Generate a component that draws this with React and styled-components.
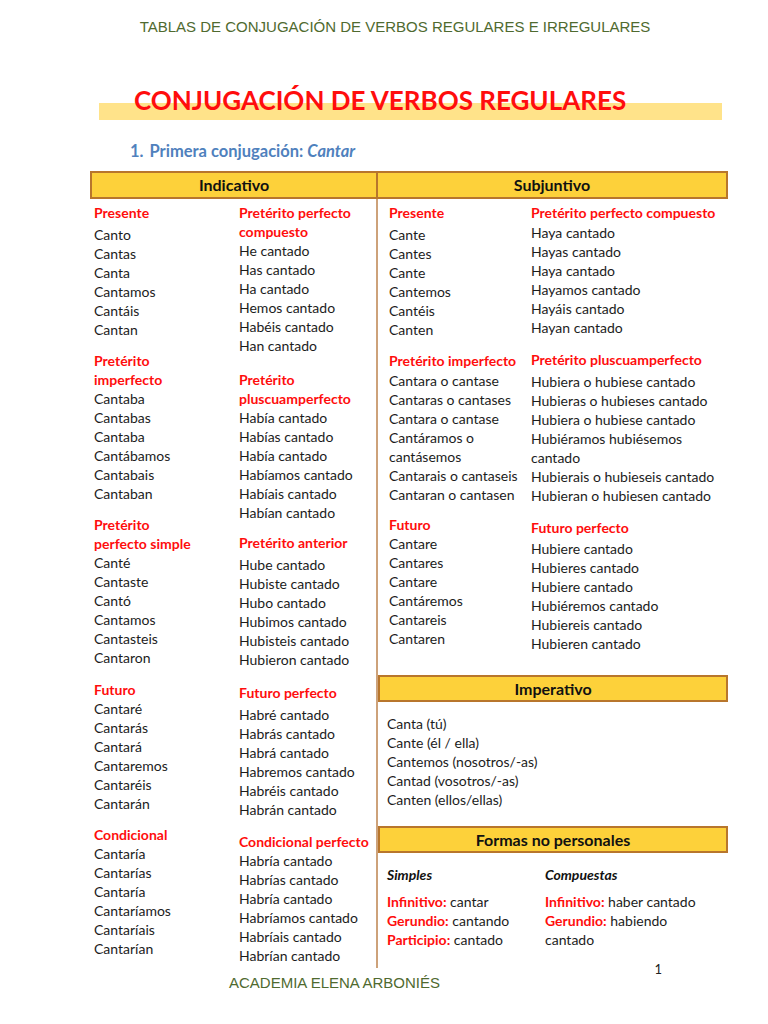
import React from 'react';
import styled, { createGlobalStyle } from 'styled-components';

const GlobalStyle = createGlobalStyle`
  html, body { margin: 0; padding: 0; background: #fff; }
  body { font-family: Lato, "Noto Sans", sans-serif; }
`;

const GREEN = '#4f6a2f';
const RED = '#ff0d0d';
const YELLOW = '#fdd13a';
const BORDER = '#b8762c';
const DIVIDER = '#cda27a';

const Page = styled.div`
  width: 768px;
  height: 1024px;
  overflow: hidden;
  background: #fff;
  color: #1c1c1c;
`;

const RunningHead = styled.div`
  padding: 19px 0 0 22px;
  text-align: center;
  font: 15px/16px "Liberation Sans", Arial, sans-serif;
  color: ${GREEN};
`;

const TitleBar = styled.div`
  margin: 45px 46px 0 99px;
  height: 40px;
  background: linear-gradient(to bottom, transparent 23px, #ffe38a 23px);
`;

const Title = styled.h1`
  margin: 0;
  padding-left: 35px;
  font: 700 26px/40px Lato, sans-serif;
  color: ${RED};
  white-space: nowrap;
`;

const Subtitle = styled.h2`
  margin: 21px 0 0;
  padding-left: 130px;
  font: 700 16.5px/20px Lato, sans-serif;
  color: #4f81bd;
  white-space: nowrap;
  & > span { margin-right: 6px; }
  & > em { font-style: italic; }
`;

const Table = styled.div`
  margin: 10px 0 0 90px;
  width: 638px;
`;

const HeaderRow = styled.div`
  display: grid;
  grid-template-columns: 286px 1fr;
  height: 28px;
  box-sizing: border-box;
  border: 2px solid ${BORDER};
  background: ${YELLOW};
`;

const HeadCell = styled.div`
  text-align: center;
  font: 700 16px/24px Lato, sans-serif;
  color: #111;
  &:first-child { border-right: 2px solid ${BORDER}; }
`;

const Body = styled.div`
  display: grid;
  grid-template-columns: 288px 1fr;
`;

const LeftCell = styled.div`
  border-right: 2px solid ${DIVIDER};
  padding: 4px 0 3px 4px;
  display: grid;
  grid-template-columns: 145px 1fr;
  align-items: start;
`;

const RightCell = styled.div`
  display: flex;
  flex-direction: column;
  padding-top: 4px;
`;

const TopGrid = styled.div`
  padding-left: 11px;
  display: grid;
  grid-template-columns: 142px 1fr;
  align-items: start;
`;

const Column = styled.div`
  display: flex;
  flex-direction: column;
`;

const Group = styled.div`
  margin-top: ${(p) => p.$mt}px;
`;

const Heading = styled.div`
  font: 700 14px/19px Lato, sans-serif;
  color: ${RED};
  white-space: nowrap;
  margin-bottom: ${(p) => p.$hb || 0}px;
`;

const Line = styled.div`
  font: 400 14px/19px Lato, sans-serif;
  color: #1c1c1c;
  white-space: nowrap;
`;

const SectionBox = styled.div`
  margin-top: ${(p) => p.$mt}px;
  height: 27px;
  box-sizing: border-box;
  border: 2px solid ${BORDER};
  background: ${YELLOW};
  text-align: center;
  font: 700 16px/23px Lato, sans-serif;
  color: #111;
`;

const ImperList = styled.div`
  margin-top: 12px;
  padding-left: 9px;
`;

const NPGrid = styled.div`
  margin-top: 12px;
  padding-left: 9px;
  display: grid;
  grid-template-columns: 158px 1fr;
  row-gap: 8px;
`;

const SubHead = styled.div`
  font: italic 700 14px/19px Lato, sans-serif;
  color: #111;
`;

const Label = styled.span`
  font-weight: 700;
  color: ${RED};
`;

const PageNum = styled.div`
  margin-top: -6px;
  padding-right: 106px;
  text-align: right;
  font: 13px/14px Lato, sans-serif;
  color: #222;
`;

const FootText = styled.div`
  margin-top: -1px;
  padding-left: 229px;
  font: 15px/16px "Liberation Sans", Arial, sans-serif;
  color: ${GREEN};
`;

const leftCol1 = [
  { mt: 0, hb: 3, head: ['Presente'], items: ['Canto', 'Cantas', 'Canta', 'Cantamos', 'Cantáis', 'Cantan'] },
  { mt: 12, hb: 0, head: ['Pretérito', 'imperfecto'], items: ['Cantaba', 'Cantabas', 'Cantaba', 'Cantábamos', 'Cantabais', 'Cantaban'] },
  { mt: 12, hb: 0, head: ['Pretérito', 'perfecto simple'], items: ['Canté', 'Cantaste', 'Cantó', 'Cantamos', 'Cantasteis', 'Cantaron'] },
  { mt: 13, hb: 0, head: ['Futuro'], items: ['Cantaré', 'Cantarás', 'Cantará', 'Cantaremos', 'Cantaréis', 'Cantarán'] },
  { mt: 12, hb: 0, head: ['Condicional'], items: ['Cantaría', 'Cantarías', 'Cantaría', 'Cantaríamos', 'Cantaríais', 'Cantarían'] },
];

const leftCol2 = [
  { mt: 0, hb: 0, head: ['Pretérito perfecto', 'compuesto'], items: ['He cantado', 'Has cantado', 'Ha cantado', 'Hemos cantado', 'Habéis cantado', 'Han cantado'] },
  { mt: 15, hb: 0, head: ['Pretérito', 'pluscuamperfecto'], items: ['Había cantado', 'Habías cantado', 'Había cantado', 'Habíamos cantado', 'Habíais cantado', 'Habían cantado'] },
  { mt: 11, hb: 3, head: ['Pretérito anterior'], items: ['Hube cantado', 'Hubiste cantado', 'Hubo cantado', 'Hubimos cantado', 'Hubisteis cantado', 'Hubieron cantado'] },
  { mt: 14, hb: 3, head: ['Futuro perfecto'], items: ['Habré cantado', 'Habrás cantado', 'Habrá cantado', 'Habremos cantado', 'Habréis cantado', 'Habrán cantado'] },
  { mt: 13, hb: 0, head: ['Condicional perfecto'], items: ['Habría cantado', 'Habrías cantado', 'Habría cantado', 'Habríamos cantado', 'Habríais cantado', 'Habrían cantado'] },
];

const rightCol1 = [
  { mt: 0, hb: 3, head: ['Presente'], items: ['Cante', 'Cantes', 'Cante', 'Cantemos', 'Cantéis', 'Canten'] },
  { mt: 12, hb: 1, head: ['Pretérito imperfecto'], items: ['Cantara o cantase', 'Cantaras o cantases', 'Cantara o cantase', 'Cantáramos o', 'cantásemos', 'Cantarais o cantaseis', 'Cantaran o cantasen'] },
  { mt: 11, hb: 0, head: ['Futuro'], items: ['Cantare', 'Cantares', 'Cantare', 'Cantáremos', 'Cantareis', 'Cantaren'] },
];

const rightCol2 = [
  { mt: 0, hb: 1, head: ['Pretérito perfecto compuesto'], items: ['Haya cantado', 'Hayas cantado', 'Haya cantado', 'Hayamos cantado', 'Hayáis cantado', 'Hayan cantado'] },
  { mt: 13, hb: 3, head: ['Pretérito pluscuamperfecto'], items: ['Hubiera o hubiese cantado', 'Hubieras o hubieses cantado', 'Hubiera o hubiese cantado', 'Hubiéramos hubiésemos', 'cantado', 'Hubierais o hubieseis cantado', 'Hubieran o hubiesen cantado'] },
  { mt: 13, hb: 2, head: ['Futuro perfecto'], items: ['Hubiere cantado', 'Hubieres cantado', 'Hubiere cantado', 'Hubiéremos cantado', 'Hubiereis cantado', 'Hubieren cantado'] },
];

const imperativo = ['Canta (tú)', 'Cante (él / ella)', 'Cantemos (nosotros/-as)', 'Cantad (vosotros/-as)', 'Canten (ellos/ellas)'];

function TenseColumn({ groups }) {
  return (
    <Column>
      {groups.map((g, i) => (
        <Group key={i} $mt={g.mt}>
          {g.head.map((h, j) => (
            <Heading key={j} $hb={j === g.head.length - 1 ? g.hb : 0}>{h}</Heading>
          ))}
          {g.items.map((it, j) => (
            <Line key={j}>{it}</Line>
          ))}
        </Group>
      ))}
    </Column>
  );
}

export default function App() {
  return (
    <Page>
      <GlobalStyle />
      <RunningHead>TABLAS DE CONJUGACIÓN DE VERBOS REGULARES E IRREGULARES</RunningHead>
      <TitleBar>
        <Title>CONJUGACIÓN DE VERBOS REGULARES</Title>
      </TitleBar>
      <Subtitle>
        <span>1.</span>Primera conjugación: <em>Cantar</em>
      </Subtitle>
      <Table>
        <HeaderRow>
          <HeadCell>Indicativo</HeadCell>
          <HeadCell>Subjuntivo</HeadCell>
        </HeaderRow>
        <Body>
          <LeftCell>
            <TenseColumn groups={leftCol1} />
            <TenseColumn groups={leftCol2} />
          </LeftCell>
          <RightCell>
            <TopGrid>
              <TenseColumn groups={rightCol1} />
              <TenseColumn groups={rightCol2} />
            </TopGrid>
            <SectionBox $mt={22}>Imperativo</SectionBox>
            <ImperList>
              {imperativo.map((t) => (
                <Line key={t}>{t}</Line>
              ))}
            </ImperList>
            <SectionBox $mt={17}>Formas no personales</SectionBox>
            <NPGrid>
              <SubHead>Simples</SubHead>
              <SubHead>Compuestas</SubHead>
              <Column>
                <Line><Label>Infinitivo:</Label> cantar</Line>
                <Line><Label>Gerundio:</Label> cantando</Line>
                <Line><Label>Participio:</Label> cantado</Line>
              </Column>
              <Column>
                <Line><Label>Infinitivo:</Label> haber cantado</Line>
                <Line><Label>Gerundio:</Label> habiendo</Line>
                <Line>cantado</Line>
              </Column>
            </NPGrid>
          </RightCell>
        </Body>
      </Table>
      <PageNum>1</PageNum>
      <FootText>ACADEMIA ELENA ARBONIÉS</FootText>
    </Page>
  );
}
